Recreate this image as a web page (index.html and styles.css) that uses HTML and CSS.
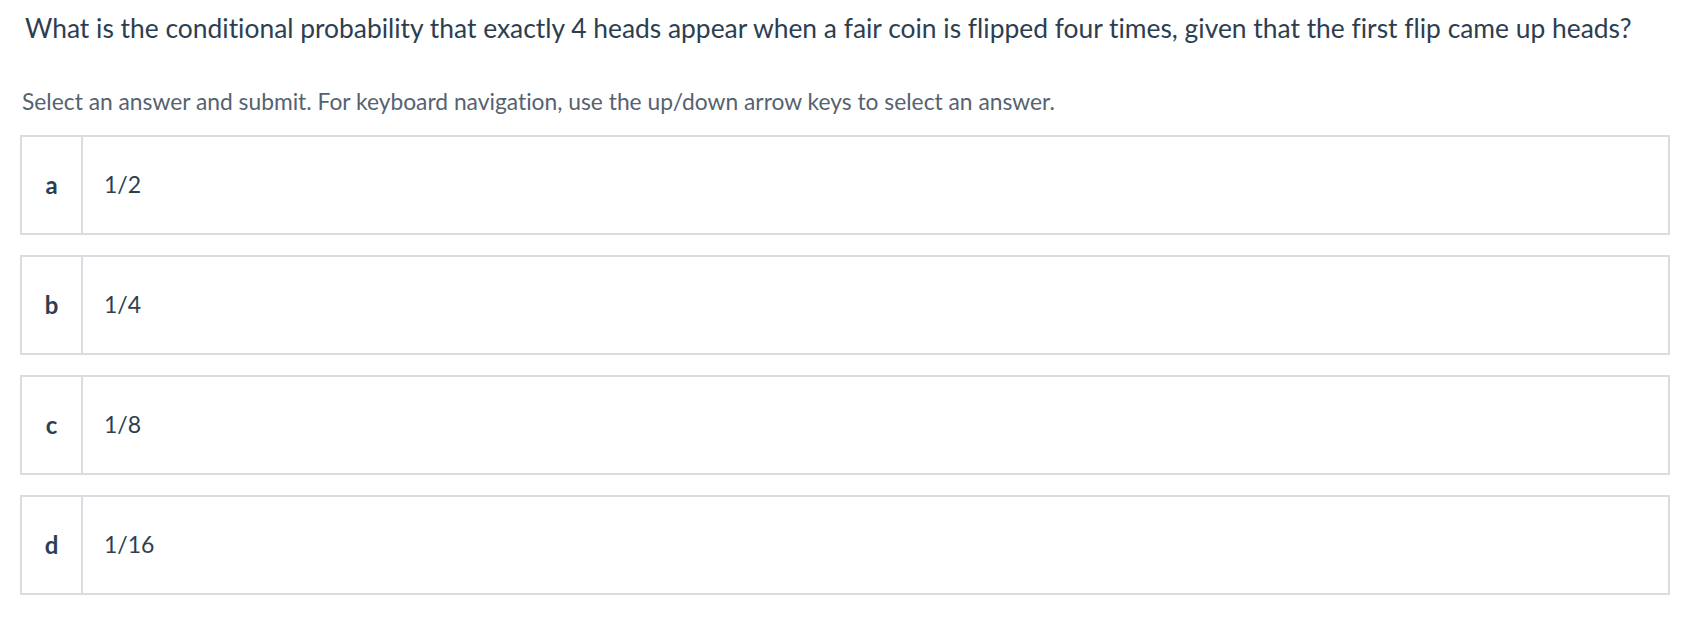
FILE: index.html
```html
<!DOCTYPE html>
<html lang="en">
<head>
    <meta charset="UTF-8">
    <title>Question</title>
    <link rel="stylesheet" href="styles.css">
</head>
<body>
    <!-- question -->
    <div class="question">
        <h1 class="question-title">What is the conditional probability that exactly 4 heads appear when a fair coin is flipped four times, given that the first flip came up heads?</h1>
        <p class="question-hint">Select an answer and submit. For keyboard navigation, use the up/down arrow keys to select an answer.</p>

        <!-- answer choices -->
        <div class="choices">
            <div class="choice">
                <div class="choice-letter">a</div>
                <div class="choice-text">1/2</div>
            </div>
            <div class="choice">
                <div class="choice-letter">b</div>
                <div class="choice-text">1/4</div>
            </div>
            <div class="choice">
                <div class="choice-letter">c</div>
                <div class="choice-text">1/8</div>
            </div>
            <div class="choice">
                <div class="choice-letter">d</div>
                <div class="choice-text">1/16</div>
            </div>
        </div>
    </div>
</body>
</html>
```

FILE: styles.css
```css
/* ====== Base ====== */
* {
    box-sizing: border-box;
    margin: 0;
    padding: 0;
}

body {
    font-family: Lato, "Open Sans", sans-serif;
    font-variant-ligatures: none;
    color: #2d3e50;
    background-color: #fff;
}

/* ====== Question ====== */
.question {
    padding: 0 23px 0 20px;
}

.question-title {
    font-size: 26.4px;
    font-weight: 400;
    line-height: 30px;
    padding: 13px 0 0 5px;
}

.question-hint {
    font-size: 22.8px;
    line-height: 28px;
    color: #56626f;
    padding: 0 0 0 2px;
    margin-top: 44px;
}

/* ====== Choices ====== */
.choices {
    display: flex;
    flex-direction: column;
    gap: 20px;
    margin-top: 20px;
}

.choice {
    display: flex;
    height: 100px;
    border: 2px solid #d9dde1;
}

.choice-letter {
    width: 61px;
    display: flex;
    align-items: center;
    justify-content: center;
    border-right: 2px solid #d9dde1;
    font-size: 24px;
    font-weight: 700;
    padding-bottom: 2px;
}

.choice-text {
    display: flex;
    align-items: center;
    padding-left: 21px;
    padding-bottom: 2px;
    font-size: 23px;
}
```
